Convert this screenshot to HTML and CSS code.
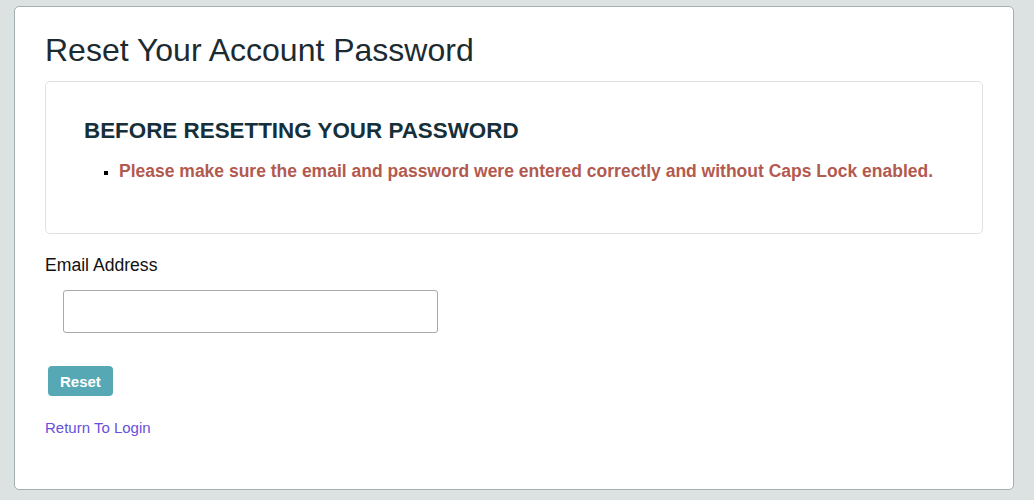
FILE: index.html
```html
<!DOCTYPE html>
<html>
<head>
<meta charset="utf-8">
<link rel="stylesheet" href="styles.css">
</head>
<body>
<div class="page">
  <div class="card">
    <h1 class="title">Reset Your Account Password</h1>
    <div class="notice">
      <h2 class="notice-title">BEFORE RESETTING YOUR PASSWORD</h2>
      <ul class="notice-list">
        <li>Please make sure the email and password were entered correctly and without Caps Lock enabled.</li>
      </ul>
    </div>
    <label class="label" for="email">Email Address</label>
    <div class="field"><input class="input" id="email" type="text"></div>
    <button class="btn">Reset</button>
    <a class="link" href="#">Return To Login</a>
  </div>
</div>
</body>
</html>
```

FILE: styles.css
```css
html, body {
  margin: 0;
  padding: 0;
  background: #dce1e1;
  font-family: "Liberation Sans", Arial, sans-serif;
}
.page {
  padding: 6px 20px 10px 14px;
}
.card {
  box-sizing: border-box;
  width: 1000px;
  height: 484px;
  background: #fff;
  border: 1px solid #a3b0b3;
  border-radius: 5px;
  padding: 0 30px 0 30px;
}
.title {
  margin: 0;
  padding-top: 25px;
  font-size: 32px;
  font-weight: normal;
  color: #1c2b30;
  line-height: 36px;
}
.notice {
  margin-top: 13px;
  height: 153px;
  box-sizing: border-box;
  border: 1px solid #dde2e3;
  border-radius: 5px;
  padding: 36px 38px 0 38px;
}
.notice-title {
  margin: 0;
  font-size: 22.4px;
  font-weight: bold;
  color: #15303a;
  line-height: 26px;
}
.notice-list {
  margin: 14px 0 0 0;
  padding-left: 35px;
  list-style: square;
}
.notice-list li {
  font-size: 17.5px;
  font-weight: bold;
  color: #b35a4f;
  line-height: 26px;
}
.notice-list li::marker {
  color: #000;
  font-size: 14px;
}
.label {
  display: block;
  margin-top: 21px;
  font-size: 17.6px;
  color: #111;
  line-height: 20px;
}
.field {
  margin-top: 15px;
  padding-left: 18px;
}
.input {
  box-sizing: border-box;
  width: 375px;
  height: 43px;
  border: 1px solid #a9a9a9;
  border-radius: 3px;
  padding: 0 8px;
  font-size: 16px;
  font-family: inherit;
  outline: none;
}
.btn {
  display: block;
  margin: 33px 0 0 3px;
  height: 30px;
  padding: 0 12px;
  background: #56a8b4;
  border: none;
  border-radius: 4px;
  color: #fff;
  font-family: inherit;
  font-weight: bold;
  font-size: 15px;
}
.link {
  display: inline-block;
  margin-top: 23px;
  font-size: 15px;
  line-height: 18px;
  color: #6650dc;
  text-decoration: none;
}
```
